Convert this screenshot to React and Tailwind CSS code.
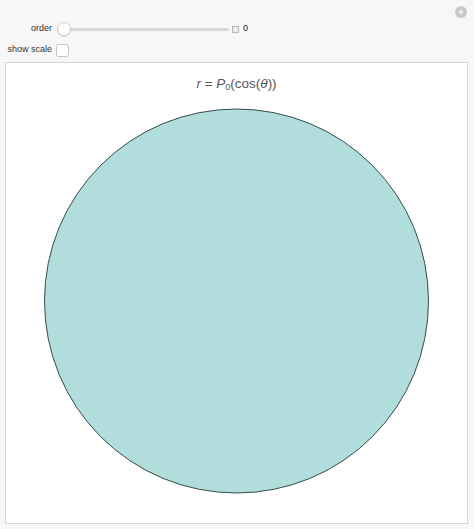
export default function App() {
  return (
    <div className="w-[474px] h-[529px] bg-[#f7f7f7] relative overflow-hidden" style={{ fontFamily: '"Liberation Sans", Arial, sans-serif' }}>
      <div className="absolute right-[7px] top-[6px] w-[12px] h-[12px] rounded-full bg-[#c8c8c8] flex items-center justify-center">
        <svg width="8" height="8" viewBox="0 0 8 8"><path d="M4 1.5v5M1.5 4h5" stroke="#f4f4f4" strokeWidth="1.4" /></svg>
      </div>
      <div className="pt-[21px] flex flex-col">
        <div className="flex items-center h-[16px]">
          <div className="w-[52px] text-right text-[9px] text-[#333]">order</div>
          <div className="relative w-[172px] ml-[5px] h-[16px] flex items-center">
            <div className="w-full h-[3px] bg-[#d8d8d8] rounded-full" />
            <div className="absolute left-0 top-[1px] w-[14px] h-[14px] rounded-full bg-white border border-[#c9c9c9] shadow-[0_1px_1px_rgba(0,0,0,0.08)]" />
          </div>
          <div className="ml-[3px] w-[7px] h-[7px] border border-[#b8b8b8] bg-[#e4e4e4] flex items-center justify-center">
            <svg width="5" height="5" viewBox="0 0 5 5"><path d="M2.5 0v5M0 2.5h5" stroke="#fafafa" strokeWidth="1" /></svg>
          </div>
          <div className="ml-[4px] text-[9px] text-[#222]">0</div>
        </div>
        <div className="flex items-center h-[16px] mt-[5px]">
          <div className="w-[52px] text-right text-[9px] text-[#333]">show scale</div>
          <div className="ml-[4px] w-[13px] h-[13px] rounded-[3px] bg-white border border-[#c4c4c4]" />
        </div>
      </div>
      <div className="absolute left-[5px] top-[62px] w-[463px] h-[462px] bg-white border border-[#d6d6d6]">
        <div className="absolute left-0 right-0 top-[11px] text-center text-[13.5px] text-[#555]">
          <i>r</i> = <i>P</i><sub className="text-[9px]">0</sub>(cos(<i>θ</i>))
        </div>
        <svg className="absolute left-0 top-0" width="463" height="462" viewBox="0 0 463 462">
          <circle cx="230.5" cy="238" r="192" fill="#b1dedc" stroke="#3a4a4a" strokeWidth="1" />
        </svg>
      </div>
    </div>
  );
}
